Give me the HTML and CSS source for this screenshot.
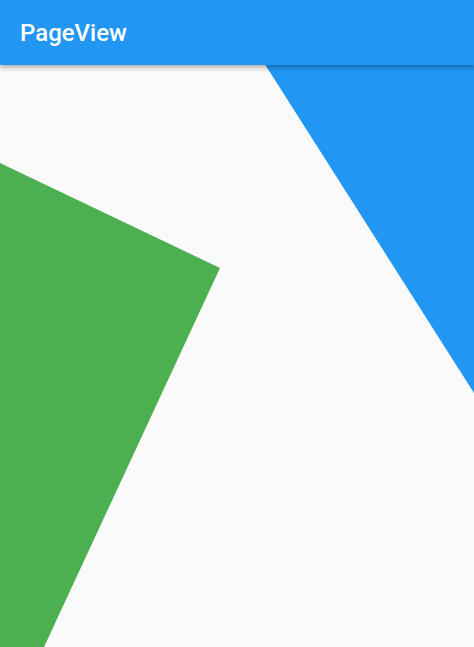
FILE: index.html
```html
<!DOCTYPE html>
<html>
<head>
<meta charset="utf-8">
<link rel="stylesheet" href="styles.css">
</head>
<body>
<div class="app">
  <header class="appbar"><h1 class="title">PageView</h1></header>
  <main class="page">
    <svg class="canvas" viewBox="0 0 474 582" width="474" height="582">
      <polygon points="265.4,0 474,0 474,328" fill="#2196F3"/>
      <polygon points="0,98 220,203 44,582 0,582" fill="#4CAF50"/>
    </svg>
  </main>
</div>
</body>
</html>
```
FILE: styles.css
```css
html, body { margin: 0; padding: 0; }
body { background: #FAFAFA; font-family: Roboto, "Noto Sans", sans-serif; overflow: hidden; }
.app { display: flex; flex-direction: column; width: 474px; height: 647px; }
.appbar {
  position: relative; z-index: 2;
  height: 65px; flex: none;
  background: #2196F3;
  display: flex; align-items: center;
  padding: 0 20px;
  box-shadow: 0 2px 4px rgba(0,0,0,0.2), 0 4px 5px rgba(0,0,0,0.12);
}
.title { margin: 0; color: #fff; font-size: 24px; font-weight: 500; letter-spacing: 0; }
.page { flex: 1; overflow: hidden; }
.canvas { display: block; }
```
